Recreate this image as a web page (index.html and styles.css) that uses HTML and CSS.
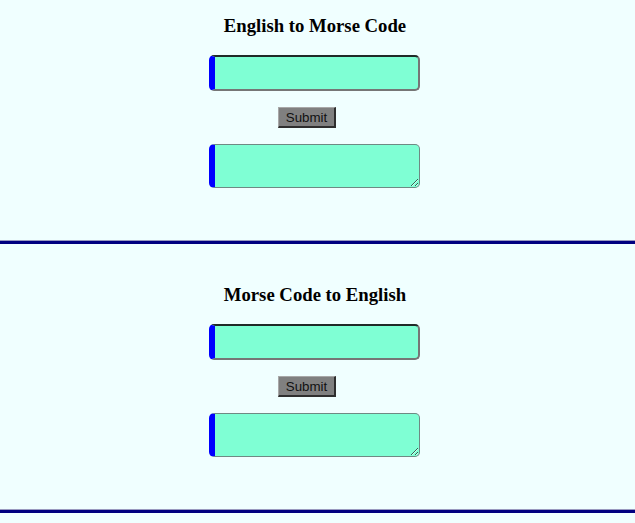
FILE: index.html
```html
<!DOCTYPE html>
<html lang="en">
<head>
    <meta charset="UTF-8">
    <meta name="viewport" content="width=device-width, initial-scale=1.0">
    <title>Morse Code Translator</title>
    <link rel="stylesheet" href="styles.css">
</head>
<body>
    <div class="section">
        <h3>English to Morse Code</h3>
        <div class="form">
            <input type="text" class="text-in">
            <button class="button">Submit</button>
            <textarea class="text-out"></textarea>
        </div>
    </div>
    <div class="section">
        <h3>Morse Code to English</h3>
        <div class="form">
            <input type="text" class="text-in">
            <button class="button">Submit</button>
            <textarea class="text-out"></textarea>
        </div>
    </div>
</body>
</html>
```

FILE: styles.css
```css
body {
    margin: 0;
    background-color: azure;
    font-family: "Liberation Serif", serif;
}

.section {
    padding: 15px 0px 53px 0px;
    margin-bottom: 25px;
    border-bottom: 3px solid navy;
    box-shadow: 0px -1px 0px #9a9ac0 inset;
}

h3 {
    margin: 0px 0px 18px -5px;
    font-size: 18.72px;
    line-height: 22px;
    text-align: center;
}

.form {
    display: flex;
    flex-direction: column;
    align-items: center;
    padding-right: 6px;
}

.text-in {
    box-sizing: border-box;
    width: 211px;
    height: 36px;
    margin: 0px;
    background-color: aquamarine;
    border: 2px solid #767676;
    border-top-color: #1f2b28;
    border-left: 6px solid blue;
    border-radius: 5px;
}

.button {
    box-sizing: border-box;
    width: 58px;
    height: 21px;
    margin: 16px 15px 16px 0px;
    padding: 0px;
    background-color: gray;
    color: #111;
    font-family: "Liberation Sans", sans-serif;
    font-size: 13.33px;
    border-style: solid;
    border-width: 1px 2px 2px 1px;
    border-color: #a8a8a8 #2e2e2e #2e2e2e #a8a8a8;
}

.text-out {
    box-sizing: border-box;
    width: 211px;
    height: 44px;
    margin: 0px;
    background-color: aquamarine;
    border: 1px solid #6e8a84;
    border-left: 6px solid blue;
    border-radius: 5px;
}
```
